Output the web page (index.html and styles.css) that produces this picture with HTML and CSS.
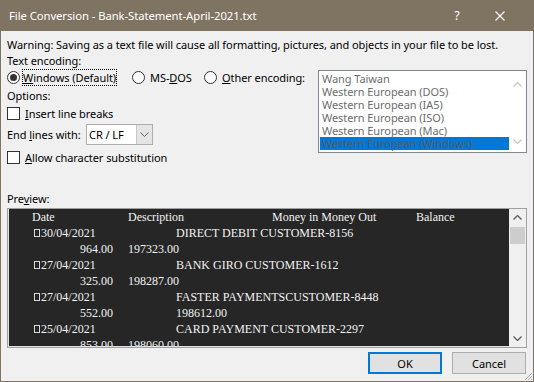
FILE: index.html
```html
<!DOCTYPE html>
<html>
<head>
<meta charset="utf-8">
<title>File Conversion</title>
<link rel="stylesheet" href="styles.css">
</head>
<body>
<div class="window">
  <div class="titlebar">
    <span class="title">File Conversion - Bank-Statement-April-2021.txt</span>
    <span class="help">?</span>
    <svg class="close" width="10" height="10" viewBox="0 0 10 10"><path d="M0.5 0.5L9.5 9.5M9.5 0.5L0.5 9.5" stroke="#fff" stroke-width="1.1" fill="none"/></svg>
  </div>
  <div class="content">
    <div class="line">Warning: Saving as a text file will cause all formatting, pictures, and objects in your file to be lost.</div>
    <div class="line">Text encoding:</div>
    <div class="enc-row">
      <div class="left-col">
        <div class="radio-row">
          <div class="opt opt-win"><span class="radio checked"></span><span class="lbl focus"><u>W</u>indows (Default)</span></div>
          <div class="opt opt-dos"><span class="radio"></span><span class="lbl">MS-<u>D</u>OS</span></div>
          <div class="opt"><span class="radio"></span><span class="lbl"><u>O</u>ther encoding:</span></div>
        </div>
        <div class="line options">Options:</div>
        <div class="check-row first"><span class="box"></span><span class="lbl"><u>I</u>nsert line breaks</span></div>
        <div class="end-row">
          <span class="end-lbl">End <u>l</u>ines with:</span>
          <div class="combo"><span class="combo-val">CR / LF</span><span class="combo-btn"><svg width="9" height="5" viewBox="0 0 9 5"><path d="M0.5 0.5L4.5 4.5L8.5 0.5" stroke="#606060" fill="none"/></svg></span></div>
        </div>
        <div class="check-row last"><span class="box"></span><span class="lbl"><u>A</u>llow character substitution</span></div>
      </div>
      <div class="listbox">
        <div class="items">
          <div class="item">Wang Taiwan</div>
          <div class="item">Western European (DOS)</div>
          <div class="item">Western European (IA5)</div>
          <div class="item">Western European (ISO)</div>
          <div class="item">Western European (Mac)</div>
          <div class="item selected">Western European (Windows)</div>
        </div>
        <div class="lb-scroll">
          <svg width="9" height="5" viewBox="0 0 9 5"><path d="M0.5 4.5L4.5 0.5L8.5 4.5" stroke="#c8c8c8" fill="none" stroke-width="1.3"/></svg>
          <svg width="9" height="5" viewBox="0 0 9 5"><path d="M0.5 0.5L4.5 4.5L8.5 0.5" stroke="#c8c8c8" fill="none" stroke-width="1.3"/></svg>
        </div>
      </div>
    </div>
    <div class="line preview-lbl">Pre<u>v</u>iew:</div>
    <div class="preview">
      <div class="preview-text">Date		Description		Money in Money Out	Balance
<span class="sq"></span>30/04/2021		DIRECT DEBIT CUSTOMER-8156
	964.00	197323.00
<span class="sq"></span>27/04/2021		BANK GIRO CUSTOMER-1612
	325.00	198287.00
<span class="sq"></span>27/04/2021		FASTER PAYMENTSCUSTOMER-8448
	552.00		198612.00
<span class="sq"></span>25/04/2021		CARD PAYMENT CUSTOMER-2297
	853.00	198060.00</div>
      <div class="pv-scroll">
        <div class="arrow"><svg width="9" height="5" viewBox="0 0 9 5"><path d="M0.5 4.5L4.5 0.5L8.5 4.5" stroke="#606060" fill="none" stroke-width="1.4"/></svg></div>
        <div class="thumb"></div>
        <div class="track"></div>
        <div class="arrow"><svg width="9" height="5" viewBox="0 0 9 5"><path d="M0.5 0.5L4.5 4.5L8.5 0.5" stroke="#606060" fill="none" stroke-width="1.4"/></svg></div>
      </div>
    </div>
    <div class="buttons">
      <div class="btn default">OK</div>
      <div class="btn">Cancel</div>
    </div>
  </div>
  <svg class="grip" width="9" height="9" viewBox="0 0 9 9"><path d="M8 1L1 8M8 4L4 8M8 7L7 8" stroke="#b0b0b0" stroke-width="1" fill="none"/></svg>
</div>
</body>
</html>
```
FILE: styles.css
```css
* { box-sizing: border-box; }
html, body { margin: 0; padding: 0; }
body {
  font-family: "Noto Sans", sans-serif;
  font-size: 11px;
  letter-spacing: -0.07px;
  color: #000;
  background: #7f7461;
}
.window {
  position: relative;
  width: 534px;
  height: 382px;
  border: 1px solid #7f7461;
  border-top: 0;
  background: #f0f0f0;
  display: flex;
  flex-direction: column;
}
.titlebar {
  height: 31px;
  background: #7f7461;
  color: #fff;
  display: flex;
  align-items: center;
  padding-left: 8px;
  flex: none;
}
.title { flex: 1; font-size: 11.3px; }
.help { width: 20px; text-align: center; font-size: 12px; margin-right: 28px; }
.close { margin-right: 28px; }
.content {
  padding: 6px 6px 0 6px;
  display: flex;
  flex-direction: column;
}
.line { height: 16px; line-height: 16px; white-space: nowrap; }
.enc-row { display: flex; align-items: flex-start; }
.left-col { display: flex; flex-direction: column; }
.radio-row { display: flex; align-items: center; height: 17px; }
.opt { display: flex; align-items: center; height: 17px; }
.opt-win { width: 125px; }
.opt-dos { width: 72px; }
.radio {
  width: 13px; height: 13px; border-radius: 50%;
  border: 1px solid #333; background: #fff;
  display: inline-block; position: relative; flex: none;
}
.radio.checked::after {
  content: ""; position: absolute; left: 2px; top: 2px;
  width: 7px; height: 7px; border-radius: 50%; background: #333;
}
.lbl { line-height: 15px; border: 1px solid transparent; padding: 0; margin-left: 4px; white-space: nowrap; }
.opt-win .lbl { margin-left: 2px; }
.focus { border: 1px dotted #000; }
.options { margin-top: 2px; }
.check-row { display: flex; align-items: center; height: 16px; }
.check-row.first { margin-top: 1px; }
.check-row.last { margin-top: 4px; }
.box { width: 13px; height: 13px; border: 1px solid #333; background: #fff; flex: none; }
.end-row { display: flex; align-items: center; margin-top: 3px; height: 21px; }
.end-lbl { width: 79px; white-space: nowrap; }
.combo {
  width: 67px; height: 21px; border: 1px solid #adadad; background: #fff;
  display: flex;
}
.combo-val { flex: 1; line-height: 19px; padding-left: 2px; }
.combo-btn {
  width: 16px; background: #e5e5e5; border-left: 1px solid #c8c8c8;
  display: flex; align-items: center; justify-content: center;
}
.listbox {
  margin-left: auto; margin-top: 1px;
  width: 209px; height: 83px;
  border: 1px solid #828790; background: #fff;
  display: flex;
  padding: 1px 0 1px 1px;
}
.items { flex: 1; }
.item { height: 13px; line-height: 13px; padding-left: 2px; color: #6d6d6d; white-space: nowrap; }
.item.selected { background: #0078d7; color: #555b66; }
.lb-scroll {
  width: 17px; display: flex; flex-direction: column; justify-content: space-between;
  align-items: center; padding: 10px 0 7px;
}
.preview-lbl { margin-top: 26px; }
.preview {
  margin-top: 1px;
  height: 140px;
  border: 1px solid #a0a0a0;
  display: flex;
  overflow: hidden;
}
.preview-text {
  flex: 1;
  background: #262626;
  border-left: 1px solid #e3e3e3;
  border-bottom: 1px solid #e3e3e3;
  color: #f2f2f2;
  font-family: "Liberation Serif", serif;
  font-size: 12px;
  letter-spacing: 0;
  line-height: 16px;
  white-space: pre;
  tab-size: 48px;
  padding-left: 23px;
  overflow: hidden;
}
.sq {
  display: inline-block;
  width: 6px; height: 8px;
  border: 1px solid #d8d8d8;
  margin: 0 1px 0 2px;
}
.pv-scroll {
  width: 17px; background: #f0f0f0; display: flex; flex-direction: column; flex: none;
}
.arrow { height: 17px; display: flex; align-items: center; justify-content: center; flex: none; }
.thumb { height: 17px; margin: 1px 1px 0; background: #cdcdcd; flex: none; }
.track { flex: 1; }
.buttons { display: flex; justify-content: flex-end; gap: 10px; margin-top: 4px; padding-right: 1px; }
.btn {
  width: 74px; height: 22px; background: #e1e1e1; border: 1px solid #adadad;
  display: flex; align-items: center; justify-content: center;
}
.btn.default { border: 2px solid #0078d7; }
.grip { position: absolute; right: 0; bottom: 0; }
```
